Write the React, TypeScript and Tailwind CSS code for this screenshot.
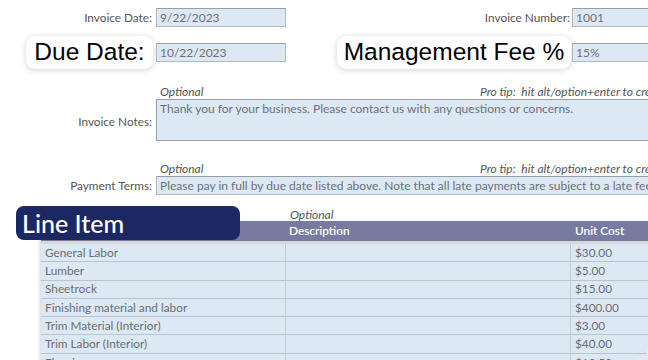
import React from "react";

// ─── Data ─────────────────────────────────────────────────────────────────────
const LINE_ITEMS: { name: string; description: string; cost: string }[] = [
  { name: "General Labor", description: "", cost: "$30.00" },
  { name: "Lumber", description: "", cost: "$5.00" },
  { name: "Sheetrock", description: "", cost: "$15.00" },
  { name: "Finishing material and labor", description: "", cost: "$400.00" },
  { name: "Trim Material (Interior)", description: "", cost: "$3.00" },
  { name: "Trim Labor (Interior)", description: "", cost: "$40.00" },
  { name: "Flooring", description: "", cost: "$12.50" },
];

const FONT = { fontFamily: "Lato, 'Open Sans', sans-serif" };
const CALLOUT_FONT = { fontFamily: "'Liberation Sans', Arial, sans-serif" };

function Field({ value, className }: { value: string; className?: string }) {
  return (
    <div
      className={
        "h-[19px] bg-[#dde8f5] border border-[#b4b9bf] border-t-[#9a9ea3] text-[12px] leading-[17px] text-[#6d7278] px-[3px] whitespace-nowrap overflow-hidden " +
        (className ?? "")
      }
    >
      {value}
    </div>
  );
}

function Callout({ text, className }: { text: string; className?: string }) {
  return (
    <div
      className={
        "h-[33px] bg-white rounded-[9px] shadow-[0_1px_6px_rgba(0,0,0,0.18)] flex items-center justify-center text-[24.5px] leading-none text-black whitespace-nowrap " +
        (className ?? "")
      }
      style={CALLOUT_FONT}
    >
      {text}
    </div>
  );
}

export default function App() {
  return (
    <div className="w-[648px] h-[360px] bg-[#e6e6e6] overflow-hidden" style={FONT}>
      <div className="relative w-[648px] h-[360px] bg-white rounded-br-[12px] overflow-hidden">
        <div className="w-[760px] pt-[8px]">
          {/* Row 1 */}
          <div className="flex items-center h-[19px]">
            <div className="w-[154px] pr-[2px] text-right text-[11.8px] text-[#555]">Invoice Date:</div>
            <Field value="9/22/2023" className="w-[130px] ml-[2px]" />
            <div className="w-[286px] pr-[2px] text-right text-[11.8px] text-[#555]">Invoice Number:</div>
            <Field value="1001" className="w-[120px]" />
          </div>

          {/* Row 2 */}
          <div className="flex items-center h-[33px] mt-[9px]">
            <div className="w-[154px] flex justify-end pr-[1px]">
              <Callout text="Due Date:" className="w-[127px]" />
            </div>
            <Field value="10/22/2023" className="w-[130px] ml-[2px]" />
            <div className="w-[286px] flex justify-end pr-[1px]">
              <Callout text="Management Fee %" className="w-[234px]" />
            </div>
            <Field value="15%" className="w-[120px]" />
          </div>

          {/* Invoice Notes */}
          <div className="flex mt-[16px] h-[13px] items-center text-[12px] italic text-[#555] whitespace-nowrap">
            <div className="w-[160px]" />
            <div className="w-[320px]">Optional</div>
            <div>Pro tip:&nbsp; hit alt/option+enter to create a new line</div>
          </div>
          <div className="flex mt-[1px]">
            <div className="w-[154px] pr-[2px] pt-[14px] text-right text-[11.8px] text-[#555]">Invoice Notes:</div>
            <div className="ml-[2px] w-[560px] h-[42px] bg-[#dde8f5] border border-[#9a9ea3] text-[12px] leading-[15px] text-[#6d7278] px-[3px] pt-[1px] whitespace-nowrap overflow-hidden">
              Thank you for your business. Please contact us with any questions or concerns.
            </div>
          </div>

          {/* Payment Terms */}
          <div className="flex mt-[21px] h-[13px] items-center text-[12px] italic text-[#555] whitespace-nowrap">
            <div className="w-[160px]" />
            <div className="w-[320px]">Optional</div>
            <div>Pro tip:&nbsp; hit alt/option+enter to create a new line</div>
          </div>
          <div className="flex items-center mt-[1px] h-[19px]">
            <div className="w-[154px] pr-[2px] text-right text-[11.8px] text-[#555]">Payment Terms:</div>
            <Field
              value="Please pay in full by due date listed above. Note that all late payments are subject to a late fee."
              className="w-[560px] ml-[2px]"
            />
          </div>

          {/* Line items table */}
          <div className="mt-[13px] h-[13px] flex items-center text-[12px] italic text-[#555]">
            <div className="w-[290px]" />
            <div>Optional</div>
          </div>
          <div className="ml-[41px] w-[720px] shadow-[-1px_1px_3px_rgba(0,0,0,0.18)]">
            <div className="flex h-[20px] items-center bg-[#767b9f] text-white text-[11.8px] font-semibold rounded-tr-[6px]">
              <div className="w-[245px] px-[4px]" />
              <div className="w-[285px] px-[3px]">Description</div>
              <div className="px-[4px]">Unit Cost</div>
            </div>
            <div className="h-[3px] bg-[#d6d8dc]" />
            {LINE_ITEMS.map((item) => (
              <div
                key={item.name}
                className="flex h-[18.3px] items-center bg-[#dde8f5] border-b border-[#bfc3c8] text-[11.8px] text-[#6b6e72]"
              >
                <div className="w-[245px] h-full px-[4px] flex items-center border-r border-[#c8ccd0]">{item.name}</div>
                <div className="w-[285px] h-full px-[3px] flex items-center border-r border-[#c8ccd0]">{item.description}</div>
                <div className="px-[4px]">{item.cost}</div>
              </div>
            ))}
          </div>
        </div>

        {/* Line Item callout overlay */}
        <div className="absolute left-[16px] top-[206px] w-[224px] h-[34px] rounded-[8px] bg-[#1c2862] flex items-center px-[6px] text-white text-[25px] font-medium leading-none">
          Line Item
        </div>
      </div>
    </div>
  );
}
